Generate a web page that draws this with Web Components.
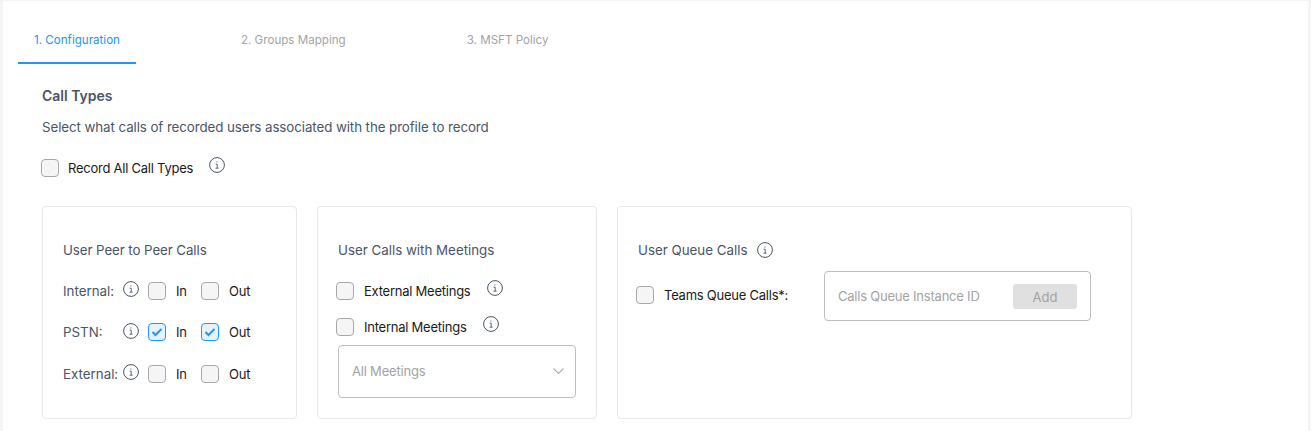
<!DOCTYPE html>
<html>
<head>
<meta charset="utf-8">
<title>Call Types</title>
<style>
    html, body { margin: 0; height: 431px; overflow: hidden; background: #f3f4f6; }
    body { font-family: Inter, Roboto, "Liberation Sans", sans-serif; }
</style>
</head>
<body>
<profile-page>
    <step-tabs slot="tabs">
        <step-tab active>1. Configuration</step-tab>
        <step-tab>2. Groups Mapping</step-tab>
        <step-tab>3. MSFT Policy</step-tab>
    </step-tabs>
    <section-head slot="head"></section-head>

    <call-card style="width:255px">
        <span slot="title" style="letter-spacing:-0.09px">User Peer to Peer Calls</span>
        <peer-row label="Internal:"></peer-row>
        <peer-row label="PSTN:" checked></peer-row>
        <peer-row label="External:"></peer-row>
    </call-card>

    <call-card style="width:280px">
        <span slot="title">User Calls with Meetings</span>
        <meeting-rows></meeting-rows>
    </call-card>

    <call-card style="width:515px">
        <span slot="title">User Queue Calls</span>
        <info-icon slot="title-icon"></info-icon>
        <queue-row></queue-row>
    </call-card>
</profile-page>

<script>
class InfoIcon extends HTMLElement {
    constructor() {
        super();
        this.attachShadow({ mode: "open" }).innerHTML = `
        <style>
            :host { display: block; width: 16px; height: 16px; flex: none; }
            svg { display: block; }
        </style>
        <svg width="16" height="16" viewBox="0 0 16 16" fill="none" stroke="#4a5568" stroke-width="1">
            <circle cx="8" cy="8" r="7.4"/>
            <path d="M6.6 7.2H8.2V11M6.5 11.2H9.6" stroke-width="0.9"/>
            <path d="M7.4 4.6H8.4V5.6H7.4Z" fill="#4a5568" stroke="none"/>
        </svg>`;
    }
}
customElements.define("info-icon", InfoIcon);

class CheckBox extends HTMLElement {
    constructor() {
        super();
        this.attachShadow({ mode: "open" });
    }
    connectedCallback() {
        const on = this.hasAttribute("checked");
        this.shadowRoot.innerHTML = `
        <style>
            :host { display: inline-flex; align-items: center; color: #1a1a1a; font-size: 13px; letter-spacing: -0.24px; white-space: nowrap; }
            .box {
                box-sizing: border-box;
                width: 18px;
                height: 18px;
                flex: none;
                border-radius: 4px;
                border: 1px solid ${on ? "#2196f3" : "#a8a8a8"};
                background: ${on ? "#e6f3fe" : "#f5f5f5"};
                margin-right: var(--check-gap, 10px);
                display: flex;
                align-items: center;
                justify-content: center;
            }
        </style>
        <span class="box">${on ? `<svg width="12" height="10" viewBox="0 0 12 10" fill="none" stroke="#2196f3" stroke-width="2"><path d="M1.5 5L4.5 8L10.5 2"/></svg>` : ""}</span>
        <slot></slot>`;
    }
}
customElements.define("check-box", CheckBox);

class StepTab extends HTMLElement {
    constructor() {
        super();
        this.attachShadow({ mode: "open" }).innerHTML = `
        <style>
            :host {
                display: block;
                box-sizing: border-box;
                height: 63px;
                padding: 31px 16px 0;
                font-size: 11.6px;
                line-height: 16px;
                color: #a3a3a3;
                white-space: nowrap;
                border-bottom: 2px solid transparent;
            }
            :host([active]) { color: #2196f3; border-bottom-color: #2196f3; }
        </style>
        <slot></slot>`;
    }
}
customElements.define("step-tab", StepTab);

class StepTabs extends HTMLElement {
    constructor() {
        super();
        this.attachShadow({ mode: "open" }).innerHTML = `
        <style>
            :host { display: flex; gap: 89px; padding-left: 15px; }
        </style>
        <slot></slot>`;
    }
}
customElements.define("step-tabs", StepTabs);

class SectionHead extends HTMLElement {
    constructor() {
        super();
        this.attachShadow({ mode: "open" }).innerHTML = `
        <style>
            :host { display: block; color: #4a5568; }
            h3 { margin: 0; font: 600 14px/18px Inter, sans-serif; padding-top: 23px; }
            p { margin: 13px 0 0; font: 400 13.33px/18px Inter, sans-serif; letter-spacing: -0.08px; }
            .all { display: flex; align-items: center; margin: 22px 0 0 -1px; height: 20px; --check-gap: 9px; }
            info-icon { margin: 0 0 6px 16px; }
        </style>
        <h3>Call Types</h3>
        <p>Select what calls of recorded users associated with the profile to record</p>
        <div class="all">
            <check-box>Record All Call Types</check-box>
            <info-icon></info-icon>
        </div>`;
    }
}
customElements.define("section-head", SectionHead);

class CallCard extends HTMLElement {
    constructor() {
        super();
        this.attachShadow({ mode: "open" }).innerHTML = `
        <style>
            :host {
                display: block;
                box-sizing: border-box;
                height: 213px;
                flex: none;
                border: 1px solid #e8e8e8;
                border-radius: 4px;
                background: #fff;
                padding: 33px 20px 0;
            }
            .title {
                display: flex;
                align-items: center;
                gap: 10px;
                height: 20px;
                font-size: 13.33px;
                color: #4a5568;
            }
        </style>
        <div class="title"><slot name="title"></slot><slot name="title-icon"></slot></div>
        <slot></slot>`;
    }
}
customElements.define("call-card", CallCard);

class PeerRow extends HTMLElement {
    constructor() {
        super();
        this.attachShadow({ mode: "open" });
    }
    connectedCallback() {
        const on = this.hasAttribute("checked") ? "checked" : "";
        this.shadowRoot.innerHTML = `
        <style>
            :host {
                display: grid;
                grid-template-columns: 60px 25px 53px auto;
                align-items: center;
                height: 20px;
                margin-top: 21.5px;
                font-size: 13.33px;
                color: #4a5568;
            }
            :host(:first-of-type) { margin-top: 20.5px; }
            span { white-space: nowrap; }
            info-icon { margin-bottom: 3px; }
        </style>
        <span>${this.getAttribute("label")}</span>
        <info-icon></info-icon>
        <check-box ${on}>In</check-box>
        <check-box ${on}>Out</check-box>`;
    }
}
customElements.define("peer-row", PeerRow);

class MeetingRows extends HTMLElement {
    constructor() {
        super();
        this.attachShadow({ mode: "open" }).innerHTML = `
        <style>
            :host { display: block; margin: 21px 0 0 -2px; }
            .row { display: flex; align-items: center; height: 20px; }
            .row + .row { margin-top: 16px; }
            info-icon { margin: 0 0 6px 16px; }
            .select {
                box-sizing: border-box;
                display: flex;
                align-items: center;
                justify-content: space-between;
                width: 238px;
                height: 53px;
                margin: 8px 0 0 2px;
                padding: 0 11px 2px 13px;
                border: 1px solid #bdbdbd;
                border-radius: 4px;
                font-size: 13px;
                letter-spacing: -0.2px;
                color: #a3a3a3;
            }
        </style>
        <div class="row"><check-box>External Meetings</check-box><info-icon></info-icon></div>
        <div class="row"><check-box>Internal Meetings</check-box><info-icon></info-icon></div>
        <div class="select">All Meetings
            <svg width="11" height="6" viewBox="0 0 11 6" fill="none" stroke="#b0b0b0" stroke-width="1.1"><path d="M0.5 0.5L5.5 5.5L10.5 0.5"/></svg>
        </div>`;
    }
}
customElements.define("meeting-rows", MeetingRows);

class QueueRow extends HTMLElement {
    constructor() {
        super();
        this.attachShadow({ mode: "open" }).innerHTML = `
        <style>
            :host { display: flex; align-items: center; margin: 11px 0 0 -2px; }
            check-box { width: 188px; margin-bottom: 2px; }
            .field {
                box-sizing: border-box;
                display: flex;
                align-items: center;
                justify-content: space-between;
                width: 267px;
                height: 50px;
                padding: 0 13px;
                border: 1px solid #bdbdbd;
                border-radius: 4px;
                font-size: 13px;
                letter-spacing: -0.22px;
                color: #a3a3a3;
            }
            button {
                width: 64px;
                height: 25px;
                margin-top: 1px;
                border: 0;
                border-radius: 3px;
                background: #e0e0e0;
                color: #a3a3a3;
                font: inherit;
                letter-spacing: 0;
                padding: 0;
            }
        </style>
        <check-box>Teams Queue Calls*:</check-box>
        <div class="field">Calls Queue Instance ID<button>Add</button></div>`;
    }
}
customElements.define("queue-row", QueueRow);

class ProfilePage extends HTMLElement {
    constructor() {
        super();
        this.attachShadow({ mode: "open" }).innerHTML = `
        <style>
            :host {
                display: block;
                box-sizing: border-box;
                height: 431px;
                margin: 1px 3px 0;
                background: #fff;
            }
            .body { padding: 0 39px; }
            .cards { display: flex; gap: 20px; margin-top: 28px; }
        </style>
        <slot name="tabs"></slot>
        <div class="body">
            <slot name="head"></slot>
            <div class="cards"><slot></slot></div>
        </div>`;
    }
}
customElements.define("profile-page", ProfilePage);
</script>
</body>
</html>
